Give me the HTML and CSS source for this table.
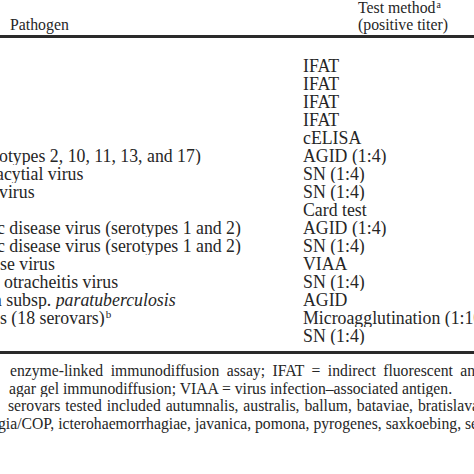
FILE: index.html
```html
<!DOCTYPE html>
<html>
<head>
<meta charset="utf-8">
<link rel="stylesheet" href="styles.css">
</head>
<body>
<div class="page">
  <div class="head">
    <div class="h-path">Pathogen</div>
    <div class="h-test">
      <div>Test method<sup>a</sup></div>
      <div>(positive titer)</div>
    </div>
  </div>
  <div class="rule"></div>
  <div class="rows">
    <div class="row"><div class="path"></div><div class="test">IFAT</div></div>
    <div class="row"><div class="path"></div><div class="test">IFAT</div></div>
    <div class="row"><div class="path"></div><div class="test">IFAT</div></div>
    <div class="row"><div class="path"></div><div class="test">IFAT</div></div>
    <div class="row"><div class="path"></div><div class="test">cELISA</div></div>
    <div class="row"><div class="path"><span class="c1">otypes 2, 10, 11, 13, and 17)</span></div><div class="test">AGID (1:4)</div></div>
    <div class="row"><div class="path"><span class="c4">acytial virus</span></div><div class="test">SN (1:4)</div></div>
    <div class="row"><div class="path"><span class="c1">virus</span></div><div class="test">SN (1:4)</div></div>
    <div class="row"><div class="path"></div><div class="test">Card test</div></div>
    <div class="row"><div class="path"><span class="c3">c disease virus (serotypes 1 and 2)</span></div><div class="test">AGID (1:4)</div></div>
    <div class="row"><div class="path"><span class="c3">c disease virus (serotypes 1 and 2)</span></div><div class="test">SN (1:4)</div></div>
    <div class="row"><div class="path"><span class="c0">se virus</span></div><div class="test">VIAA</div></div>
    <div class="row"><div class="path"><span class="p4">otracheitis virus</span></div><div class="test">SN (1:4)</div></div>
    <div class="row"><div class="path"><span class="cm">m subsp. <i>paratuberculosis</i></span></div><div class="test">AGID</div></div>
    <div class="row"><div class="path"><span class="c0">s (18 serovars)<sup>b</sup></span></div><div class="test">Microagglutination (1:100)</div></div>
    <div class="row"><div class="path"></div><div class="test">SN (1:4)</div></div>
  </div>
  <div class="rule"></div>
  <div class="notes">
    <div class="note n1">enzyme-linked immunodiffusion assay; IFAT = indirect fluorescent antibody</div>
    <div class="note n2">agar gel immunodiffusion; VIAA = virus infection–associated antigen.</div>
    <div class="note n3">serovars tested included autumnalis, australis, ballum, bataviae, bratislava,</div>
    <div class="note n4">gia/COP, icterohaemorrhagiae, javanica, pomona, pyrogenes, saxkoebing, sejroe</div>
  </div>
</div>
</body>
</html>
```

FILE: styles.css
```css
html, body {
  margin: 0;
  padding: 0;
  background: #ffffff;
}
body {
  width: 474px;
  height: 474px;
  overflow: hidden;
  font-family: "Liberation Serif", "Times New Roman", serif;
  color: #262626;
}
.page {
  width: 474px;
  overflow: hidden;
}
.head {
  display: grid;
  grid-template-columns: 303px 1fr;
  height: 35px;
  font-size: 15.8px;
  line-height: 17px;
  white-space: nowrap;
}
.h-path {
  padding-left: 10px;
  padding-top: 16px;
}
.h-test {
  padding-left: 55px;
  margin-top: -1px;
}
sup {
  font-size: 0.62em;
  line-height: 0;
  vertical-align: 0.55em;
  margin-left: 1px;
}
.rule {
  height: 3px;
  background: #2a2a2a;
}
.rows {
  padding-top: 19px;
  padding-bottom: 6px;
}
.row {
  display: grid;
  grid-template-columns: 303px 1fr;
  height: 18px;
  line-height: 18px;
  font-size: 17.8px;
  white-space: nowrap;
}
.path, .test {
  overflow: hidden;
}
.path span {
  display: inline-block;
}
.c0 { margin-left: 0; }
.c1 { margin-left: -1px; }
.c3 { margin-left: -3px; }
.c4 { margin-left: -4px; }
.p4 { margin-left: 4px; }
.cm { margin-left: -12px; }
.notes {
  padding-top: 8px;
  font-size: 15.7px;
  line-height: 17.7px;
}
.note {
  white-space: nowrap;
  overflow: hidden;
}
.n1 { padding-left: 10px; word-spacing: 3.5px; }
.n2 { padding-left: 9px; }
.n3 { padding-left: 8px; word-spacing: 1px; }
.n4 { margin-left: -2px; word-spacing: 0; }
```
